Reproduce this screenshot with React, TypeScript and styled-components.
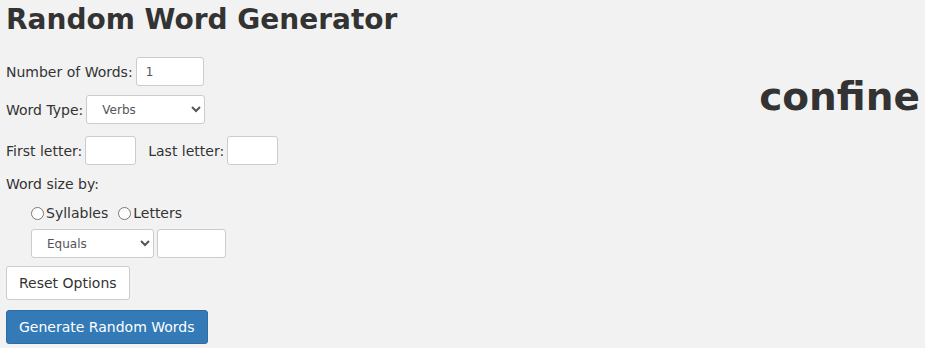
import styled, { createGlobalStyle } from 'styled-components';

const GlobalStyle = createGlobalStyle`
	html, body {
		margin: 0;
		padding: 0;
		background: #f2f2f2;
	}
	body {
		font-family: 'DejaVu Sans', 'Liberation Sans', sans-serif;
		color: #333;
	}
`;

function App() {
	return (
		<>
			<GlobalStyle />
			<Page>
				<Title>Random Word Generator</Title>
				<Body>
					<Form>
						<Row space={9}>
							<Label>Number of Words:</Label>
							<TextInput width={68} defaultValue="1" />
						</Row>
						<Row space={12}>
							<Label>Word Type:</Label>
							<Select width={119} defaultValue="Verbs">
								<option>Verbs</option>
							</Select>
						</Row>
						<Row space={9}>
							<Label>First letter:</Label>
							<TextInput width={51} />
							<Label className="gap">Last letter:</Label>
							<TextInput width={51} />
						</Row>
						<SizeTitle>Word size by:</SizeTitle>
						<Indent>
							<RadioRow>
								<RadioLabel>
									<Radio type="radio" name="size" />
									Syllables
								</RadioLabel>
								<RadioLabel>
									<Radio type="radio" name="size" />
									Letters
								</RadioLabel>
							</RadioRow>
							<Row space={8}>
								<Select width={123} defaultValue="Equals">
									<option>Equals</option>
								</Select>
								<TextInput width={69} />
							</Row>
						</Indent>
						<Button>Reset Options</Button>
						<Button primary>Generate Random Words</Button>
					</Form>
					<Result>confine</Result>
				</Body>
			</Page>
		</>
	);
}

const Page = styled.div`
	padding: 0 5px 0 6px;
`;

const Title = styled.h1`
	margin: 0;
	padding-top: 3px;
	font-size: 28px;
	font-weight: bold;
	line-height: 34px;
	color: #333;
`;

const Body = styled.div`
	display: flex;
	justify-content: space-between;
	margin-top: 20px;
`;

const Form = styled.div`
	display: flex;
	flex-direction: column;
	align-items: flex-start;
`;

const Row = styled.div<{ space: number }>`
	display: flex;
	align-items: center;
	gap: 3px;
	margin-bottom: ${(p) => p.space}px;

	.gap {
		margin-left: 9px;
	}
`;

const Label = styled.span`
	font-size: 14px;
	color: #333;
`;

const TextInput = styled.input<{ width: number }>`
	box-sizing: border-box;
	width: ${(p) => p.width}px;
	height: 29px;
	border: 1px solid #ccc;
	border-radius: 3px;
	background: #fff;
	padding: 0 9px;
	font-family: inherit;
	font-size: 12px;
	color: #555;
	outline: none;
`;

const Select = styled.select<{ width: number }>`
	box-sizing: border-box;
	width: ${(p) => p.width}px;
	height: 29px;
	border: 1px solid #ccc;
	border-radius: 3px;
	background: #fff;
	padding: 0 11px;
	font-family: inherit;
	font-size: 12px;
	color: #555;
`;

const SizeTitle = styled.div`
	font-size: 14px;
	margin: 2px 0 13px;
`;

const Indent = styled.div`
	padding-left: 25px;
`;

const RadioRow = styled.div`
	display: flex;
	gap: 10px;
	margin-bottom: 8px;
`;

const RadioLabel = styled.label`
	display: flex;
	align-items: center;
	font-size: 14px;
	gap: 2px;
`;

const Radio = styled.input`
	margin: 0;
	width: 13px;
	height: 13px;
`;

const Button = styled.button<{ primary?: boolean }>`
	height: 34px;
	padding: 0 12px;
	margin-bottom: 10px;
	border-radius: 3px;
	border: 1px solid ${(p) => (p.primary ? '#2e6da4' : '#ccc')};
	background: ${(p) => (p.primary ? '#337ab7' : '#fff')};
	color: ${(p) => (p.primary ? '#fff' : '#333')};
	font-family: inherit;
	font-size: 14px;
`;

const Result = styled.div`
	margin-top: 17px;
	font-size: 39px;
	font-weight: bold;
	color: #333;
`;

export default App;
